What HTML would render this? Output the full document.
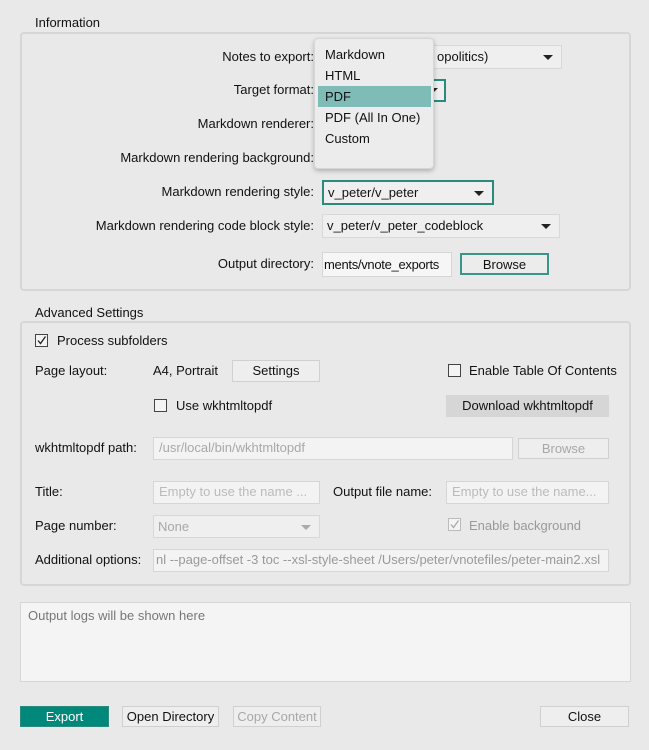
<!DOCTYPE html>
<html><head><meta charset="utf-8"><style>
*{box-sizing:border-box;margin:0;padding:0}
body{width:649px;height:750px;background:#e9e9e9;font-family:"Liberation Sans",Arial,sans-serif;font-size:13px;color:#111;position:relative;overflow:hidden}
.a{position:absolute;white-space:nowrap}
.box{position:absolute;border:2px solid #d6d6d6;border-radius:4px}
.lbl{position:absolute;right:335px;white-space:nowrap}
.cb{position:absolute;background:#efefef;border:1px solid #d8d8d8;padding-left:4px;line-height:22px;white-space:nowrap;overflow:hidden}
.arr{position:absolute;right:8px;top:9px;width:0;height:0;border-left:5px solid transparent;border-right:5px solid transparent;border-top:5px solid #222}
.btn{position:absolute;background:#eee;border:1px solid #d0d0d0;text-align:center;line-height:19px}
.chk{position:absolute;width:13px;height:13px;border:1px solid #444;background:#f4f4f4}
.dis{color:#a8a8a8}
.in{position:absolute;background:#f3f3f3;border:1px solid #d6d6d6;line-height:20px;padding-left:5px;white-space:nowrap;overflow:hidden}
</style></head><body>
<div class="a" style="left:35px;top:15px">Information</div>
<div class="box" style="left:20px;top:32px;width:611px;height:259px"></div>
<div class="lbl" style="top:49px">Notes to export:</div>
<div class="lbl" style="top:82px">Target format:</div>
<div class="lbl" style="top:116px">Markdown renderer:</div>
<div class="lbl" style="top:150px">Markdown rendering background:</div>
<div class="lbl" style="top:184px">Markdown rendering style:</div>
<div class="lbl" style="top:218px">Markdown rendering code block style:</div>
<div class="lbl" style="top:256px">Output directory:</div>
<div class="cb" style="left:322px;top:45px;width:240px;height:24px"><span style="margin-left:110px">opolitics)</span><div class="arr"></div></div>
<div class="cb" style="left:322px;top:79px;width:124px;height:23px;border:2px solid #2a8a7e"><div class="arr" style="top:7px;right:6px"></div></div>
<div class="cb" style="left:322px;top:180px;width:172px;height:25px;border:2px solid #2a8a7e">v_peter/v_peter<div class="arr"></div></div>
<div class="cb" style="left:322px;top:214px;width:238px;height:24px">v_peter/v_peter_codeblock<div class="arr"></div></div>
<div class="in" style="left:322px;top:252px;width:130px;height:25px;background:#f6f6f6;line-height:24px;padding-left:1px;letter-spacing:-0.3px">ments/vnote_exports</div>
<div class="btn" style="left:460px;top:253px;width:89px;height:22px;border:2px solid #3a9488;background:#ececec">Browse</div>
<div class="a" style="left:314px;top:38px;width:120px;height:131px;background:#ececec;border:1px solid #d6d6d6;border-radius:4px;box-shadow:0 2px 5px rgba(0,0,0,.25)">
<div class="a" style="left:10px;top:8px">Markdown</div>
<div class="a" style="left:10px;top:29px">HTML</div>
<div class="a" style="left:3px;top:47px;width:113px;height:21px;background:#7fbcb8"></div>
<div class="a" style="left:10px;top:50px">PDF</div>
<div class="a" style="left:10px;top:71px">PDF (All In One)</div>
<div class="a" style="left:10px;top:92px">Custom</div>
</div>
<div class="a" style="left:35px;top:305px">Advanced Settings</div>
<div class="box" style="left:20px;top:321px;width:611px;height:265px"></div>
<div class="chk" style="left:35px;top:334px"><svg width="11" height="11" style="position:absolute;left:0;top:0"><path d="M2 5.5 L4.5 8.5 L9.5 1.5" stroke="#222" stroke-width="1.3" fill="none"/></svg></div>
<div class="a" style="left:57px;top:333px">Process subfolders</div>
<div class="a" style="left:35px;top:363px">Page layout:</div>
<div class="a" style="left:153px;top:363px">A4, Portrait</div>
<div class="btn" style="left:232px;top:360px;width:88px;height:22px">Settings</div>
<div class="chk" style="left:448px;top:364px"></div>
<div class="a" style="left:469px;top:363px">Enable Table Of Contents</div>
<div class="chk" style="left:154px;top:399px"></div>
<div class="a" style="left:176px;top:398px">Use wkhtmltopdf</div>
<div class="btn" style="left:446px;top:395px;width:163px;height:22px;background:#d6d6d6;border-color:#d6d6d6">Download wkhtmltopdf</div>
<div class="a" style="left:35px;top:440px">wkhtmltopdf path:</div>
<div class="in dis" style="left:153px;top:437px;width:360px;height:23px">/usr/local/bin/wkhtmltopdf</div>
<div class="btn dis" style="left:518px;top:438px;width:91px;height:21px">Browse</div>
<div class="a" style="left:35px;top:484px">Title:</div>
<div class="in" style="left:153px;top:481px;width:167px;height:23px;color:#bbb">Empty to use the name ...</div>
<div class="a" style="left:333px;top:484px">Output file name:</div>
<div class="in" style="left:446px;top:481px;width:163px;height:23px;color:#bbb">Empty to use the name...</div>
<div class="a" style="left:35px;top:518px">Page number:</div>
<div class="cb dis" style="left:153px;top:515px;width:167px;height:23px">None<div class="arr" style="border-top-color:#aaa"></div></div>
<div class="chk" style="left:448px;top:518px;border-color:#bbb"><svg width="11" height="11" style="position:absolute;left:0;top:0"><path d="M2 5.5 L4.5 8.5 L9.5 1.5" stroke="#aaa" stroke-width="1.3" fill="none"/></svg></div>
<div class="a dis" style="left:469px;top:518px;color:#999">Enable background</div>
<div class="a" style="left:35px;top:552px">Additional options:</div>
<div class="in" style="left:153px;top:549px;width:456px;height:23px;color:#999;padding-left:2px">nl --page-offset -3 toc --xsl-style-sheet /Users/peter/vnotefiles/peter-main2.xsl</div>
<div class="a" style="left:20px;top:602px;width:611px;height:80px;background:#f4f4f4;border:1px solid #d6d6d6"></div>
<div class="a" style="left:28px;top:608px;color:#777">Output logs will be shown here</div>
<div class="btn" style="left:20px;top:706px;width:89px;height:21px;background:#00897b;color:#fff;border-color:#2a8a7e">Export</div>
<div class="btn" style="left:122px;top:706px;width:97px;height:21px">Open Directory</div>
<div class="btn dis" style="left:233px;top:706px;width:88px;height:21px">Copy Content</div>
<div class="btn" style="left:540px;top:706px;width:89px;height:21px">Close</div>
</body></html>
